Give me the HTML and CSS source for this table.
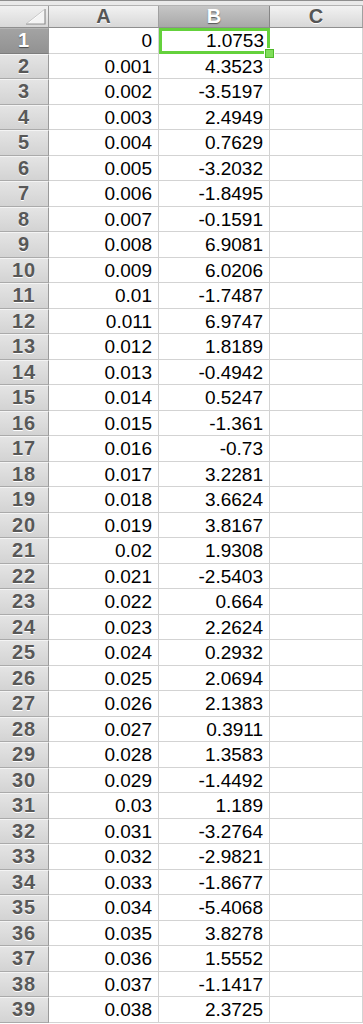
FILE: index.html
```html
<!DOCTYPE html>
<html>
<head>
<meta charset="utf-8">
<link rel="stylesheet" href="styles.css">
</head>
<body>
<div class="topbar"></div>
<div class="sheet">
  <div class="corner"><svg class="tri" width="21" height="17" viewBox="0 0 21 17"><polygon points="1,16 20,1 20,16" fill="#ffffff"/><polygon points="4,15 19,3 19,15" fill="#f4f4f4"/><polyline points="1,16 20,16 20,1" fill="none" stroke="#8c8c8c" stroke-width="1.2"/><line x1="1" y1="16" x2="20" y2="1" stroke="#bcbcbc" stroke-width="0.8"/></svg></div>
  <div class="colhead">A</div>
  <div class="colhead active">B</div>
  <div class="colhead">C</div>

  <div class="rowhead active">1</div><div class="cell">0</div><div class="cell sel">1.0753</div><div class="cell"></div>
  <div class="rowhead">2</div><div class="cell">0.001</div><div class="cell">4.3523</div><div class="cell"></div>
  <div class="rowhead">3</div><div class="cell">0.002</div><div class="cell">-3.5197</div><div class="cell"></div>
  <div class="rowhead">4</div><div class="cell">0.003</div><div class="cell">2.4949</div><div class="cell"></div>
  <div class="rowhead">5</div><div class="cell">0.004</div><div class="cell">0.7629</div><div class="cell"></div>
  <div class="rowhead">6</div><div class="cell">0.005</div><div class="cell">-3.2032</div><div class="cell"></div>
  <div class="rowhead">7</div><div class="cell">0.006</div><div class="cell">-1.8495</div><div class="cell"></div>
  <div class="rowhead">8</div><div class="cell">0.007</div><div class="cell">-0.1591</div><div class="cell"></div>
  <div class="rowhead">9</div><div class="cell">0.008</div><div class="cell">6.9081</div><div class="cell"></div>
  <div class="rowhead">10</div><div class="cell">0.009</div><div class="cell">6.0206</div><div class="cell"></div>
  <div class="rowhead">11</div><div class="cell">0.01</div><div class="cell">-1.7487</div><div class="cell"></div>
  <div class="rowhead">12</div><div class="cell">0.011</div><div class="cell">6.9747</div><div class="cell"></div>
  <div class="rowhead">13</div><div class="cell">0.012</div><div class="cell">1.8189</div><div class="cell"></div>
  <div class="rowhead">14</div><div class="cell">0.013</div><div class="cell">-0.4942</div><div class="cell"></div>
  <div class="rowhead">15</div><div class="cell">0.014</div><div class="cell">0.5247</div><div class="cell"></div>
  <div class="rowhead">16</div><div class="cell">0.015</div><div class="cell">-1.361</div><div class="cell"></div>
  <div class="rowhead">17</div><div class="cell">0.016</div><div class="cell">-0.73</div><div class="cell"></div>
  <div class="rowhead">18</div><div class="cell">0.017</div><div class="cell">3.2281</div><div class="cell"></div>
  <div class="rowhead">19</div><div class="cell">0.018</div><div class="cell">3.6624</div><div class="cell"></div>
  <div class="rowhead">20</div><div class="cell">0.019</div><div class="cell">3.8167</div><div class="cell"></div>
  <div class="rowhead">21</div><div class="cell">0.02</div><div class="cell">1.9308</div><div class="cell"></div>
  <div class="rowhead">22</div><div class="cell">0.021</div><div class="cell">-2.5403</div><div class="cell"></div>
  <div class="rowhead">23</div><div class="cell">0.022</div><div class="cell">0.664</div><div class="cell"></div>
  <div class="rowhead">24</div><div class="cell">0.023</div><div class="cell">2.2624</div><div class="cell"></div>
  <div class="rowhead">25</div><div class="cell">0.024</div><div class="cell">0.2932</div><div class="cell"></div>
  <div class="rowhead">26</div><div class="cell">0.025</div><div class="cell">2.0694</div><div class="cell"></div>
  <div class="rowhead">27</div><div class="cell">0.026</div><div class="cell">2.1383</div><div class="cell"></div>
  <div class="rowhead">28</div><div class="cell">0.027</div><div class="cell">0.3911</div><div class="cell"></div>
  <div class="rowhead">29</div><div class="cell">0.028</div><div class="cell">1.3583</div><div class="cell"></div>
  <div class="rowhead">30</div><div class="cell">0.029</div><div class="cell">-1.4492</div><div class="cell"></div>
  <div class="rowhead">31</div><div class="cell">0.03</div><div class="cell">1.189</div><div class="cell"></div>
  <div class="rowhead">32</div><div class="cell">0.031</div><div class="cell">-3.2764</div><div class="cell"></div>
  <div class="rowhead">33</div><div class="cell">0.032</div><div class="cell">-2.9821</div><div class="cell"></div>
  <div class="rowhead">34</div><div class="cell">0.033</div><div class="cell">-1.8677</div><div class="cell"></div>
  <div class="rowhead">35</div><div class="cell">0.034</div><div class="cell">-5.4068</div><div class="cell"></div>
  <div class="rowhead">36</div><div class="cell">0.035</div><div class="cell">3.8278</div><div class="cell"></div>
  <div class="rowhead">37</div><div class="cell">0.036</div><div class="cell">1.5552</div><div class="cell"></div>
  <div class="rowhead">38</div><div class="cell">0.037</div><div class="cell">-1.1417</div><div class="cell"></div>
  <div class="rowhead">39</div><div class="cell">0.038</div><div class="cell">2.3725</div><div class="cell"></div>
</div>
</body>
</html>
```

FILE: styles.css
```css
html, body {
  margin: 0;
  padding: 0;
  background: #ffffff;
  overflow: hidden;
}

body {
  font-family: "Liberation Sans", Arial, sans-serif;
}

.topbar {
  height: 4px;
  border-top: 1px solid #8e8e8e;
  border-bottom: 1px solid #b3b3b3;
  background: #e9e9e9;
}

.sheet {
  display: grid;
  grid-template-columns: 49px 110px 111px 1fr;
  grid-template-rows: 22px;
  grid-auto-rows: 25.5px;
}

.corner {
  background: linear-gradient(#f1f1f1, #d9d9d9);
  border-right: 1px solid #9a9a9a;
  border-bottom: 1px solid #8f8f8f;
  box-sizing: border-box;
  display: flex;
  align-items: flex-end;
  justify-content: flex-end;
  padding: 0 2px 2px 0;
}

.tri {
  display: block;
}

.colhead {
  box-sizing: border-box;
  background: linear-gradient(#f2f2f2, #d8d8d8);
  border-right: 1px solid #a0a0a0;
  border-bottom: 1px solid #8f8f8f;
  color: #555555;
  font-weight: bold;
  font-size: 20px;
  line-height: 21px;
  text-align: center;
  text-shadow: 0 1px 0 #ffffff;
}

.colhead.active {
  background: linear-gradient(#c6c6c6, #a8a8a8);
  color: #ffffff;
  text-shadow: 0 1px 1px #555555;
  border-right-color: #868686;
}

.rowhead {
  box-sizing: border-box;
  background: linear-gradient(#e4e4e4, #d3d3d3);
  border-right: 1px solid #9a9a9a;
  border-bottom: 1px solid #aaaaaa;
  border-top: 1px solid #f4f4f4;
  color: #585858;
  font-weight: bold;
  font-size: 20px;
  line-height: 23px;
  text-align: center;
  letter-spacing: 1px;
  text-shadow: 0 1px 0 #ffffff;
}

.rowhead.active {
  background: linear-gradient(#a3a3a3, #929292);
  border-top-color: #b5b5b5;
  border-bottom-color: #7d7d7d;
  color: #ffffff;
  text-shadow: 0 1px 1px #4a4a4a;
}

.cell {
  box-sizing: border-box;
  border-right: 1px solid #d3d3d3;
  border-bottom: 1px solid #d3d3d3;
  color: #000000;
  font-size: 19px;
  line-height: 25px;
  text-align: right;
  padding-right: 6px;
  white-space: nowrap;
  overflow: visible;
}

.cell.sel {
  position: relative;
  border: 3px solid #64d13c;
  line-height: 19px;
  padding-right: 3px;
}

.cell.sel::after {
  content: "";
  position: absolute;
  right: -7px;
  bottom: -7px;
  width: 7px;
  height: 7px;
  background: #7fde5a;
  border: 1px solid #4fb92a;
  box-shadow: 0 0 0 1px #ffffff;
}
```
